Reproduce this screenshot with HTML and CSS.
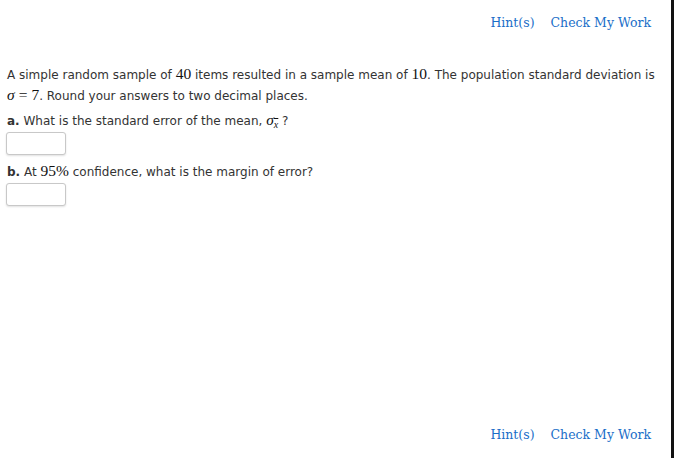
FILE: index.html
```html
<!DOCTYPE html>
<html>
<head>
<meta charset="utf-8">
<link rel="stylesheet" href="styles.css">
</head>
<body>
<div class="page">
  <div class="main">
    <div class="toolbar">
      <a class="link" href="#">Hint(s)</a>
      <a class="link" href="#">Check My Work</a>
    </div>
    <div class="question">
      <p class="stem">A simple random sample of <span class="m">40</span> items resulted in a sample mean of <span class="m">10</span>. The population standard deviation is <span class="m"><i>σ</i><span class="op">=</span>7</span>. Round your answers to two decimal places.</p>
      <div class="part">
        <p class="prompt"><b>a.</b> What is the standard error of the mean, <span class="m"><i>σ</i><sub><i class="xbar">x</i></sub></span> ?</p>
        <input class="answer" type="text">
      </div>
      <div class="part">
        <p class="prompt"><b>b.</b> At <span class="m">95%</span> confidence, what is the margin of error?</p>
        <input class="answer" type="text">
      </div>
    </div>
    <div class="spacer"></div>
    <div class="toolbar bottom">
      <a class="link" href="#">Hint(s)</a>
      <a class="link" href="#">Check My Work</a>
    </div>
  </div>
  <div class="edge"></div>
</div>
</body>
</html>
```
FILE: styles.css
```css
html, body {
  margin: 0;
  padding: 0;
  background: #fff;
}
.page {
  display: flex;
  width: 675px;
  height: 458px;
}
.main {
  flex: 1;
  display: flex;
  flex-direction: column;
  padding: 0 0 0 7px;
  font-family: "DejaVu Sans", Verdana, sans-serif;
  font-size: 12px;
  color: #333;
}
.edge {
  width: 3px;
  background: #111;
  margin-right: 1px;
}
.toolbar {
  display: flex;
  justify-content: flex-end;
  gap: 16px;
  padding: 15px 20px 0 0;
  height: 20px;
  line-height: 16px;
}
.toolbar.bottom {
  padding: 0 20px 11px 0;
}
.link {
  font-family: "DejaVu Serif", Georgia, serif;
  font-size: 12.5px;
  color: #1a6ec8;
  text-decoration: none;
}
.question {
  padding-top: 30px;
}
.stem {
  margin: 0;
  line-height: 21px;
}
.m {
  font-family: "Liberation Serif", "Times New Roman", serif;
  font-size: 15.5px;
  line-height: 1;
  color: #111;
  white-space: nowrap;
}
.op {
  padding: 0 4px;
}
.xbar {
  text-decoration: overline;
  font-size: 10px;
}
sub {
  vertical-align: -3px;
  font-size: 10px;
  line-height: 0;
}
.part {
  margin-top: 5px;
}
.part + .part {
  margin-top: 8px;
}
.prompt {
  margin: 0;
  line-height: 18px;
}
.answer {
  display: block;
  box-sizing: border-box;
  width: 60px;
  height: 23px;
  margin: 2px 0 0 -1px;
  border: 1px solid #c8c8c8;
  border-radius: 3px;
  box-shadow: 0 1px 2px rgba(0,0,0,0.12);
}
.spacer {
  flex: 1;
}
```
